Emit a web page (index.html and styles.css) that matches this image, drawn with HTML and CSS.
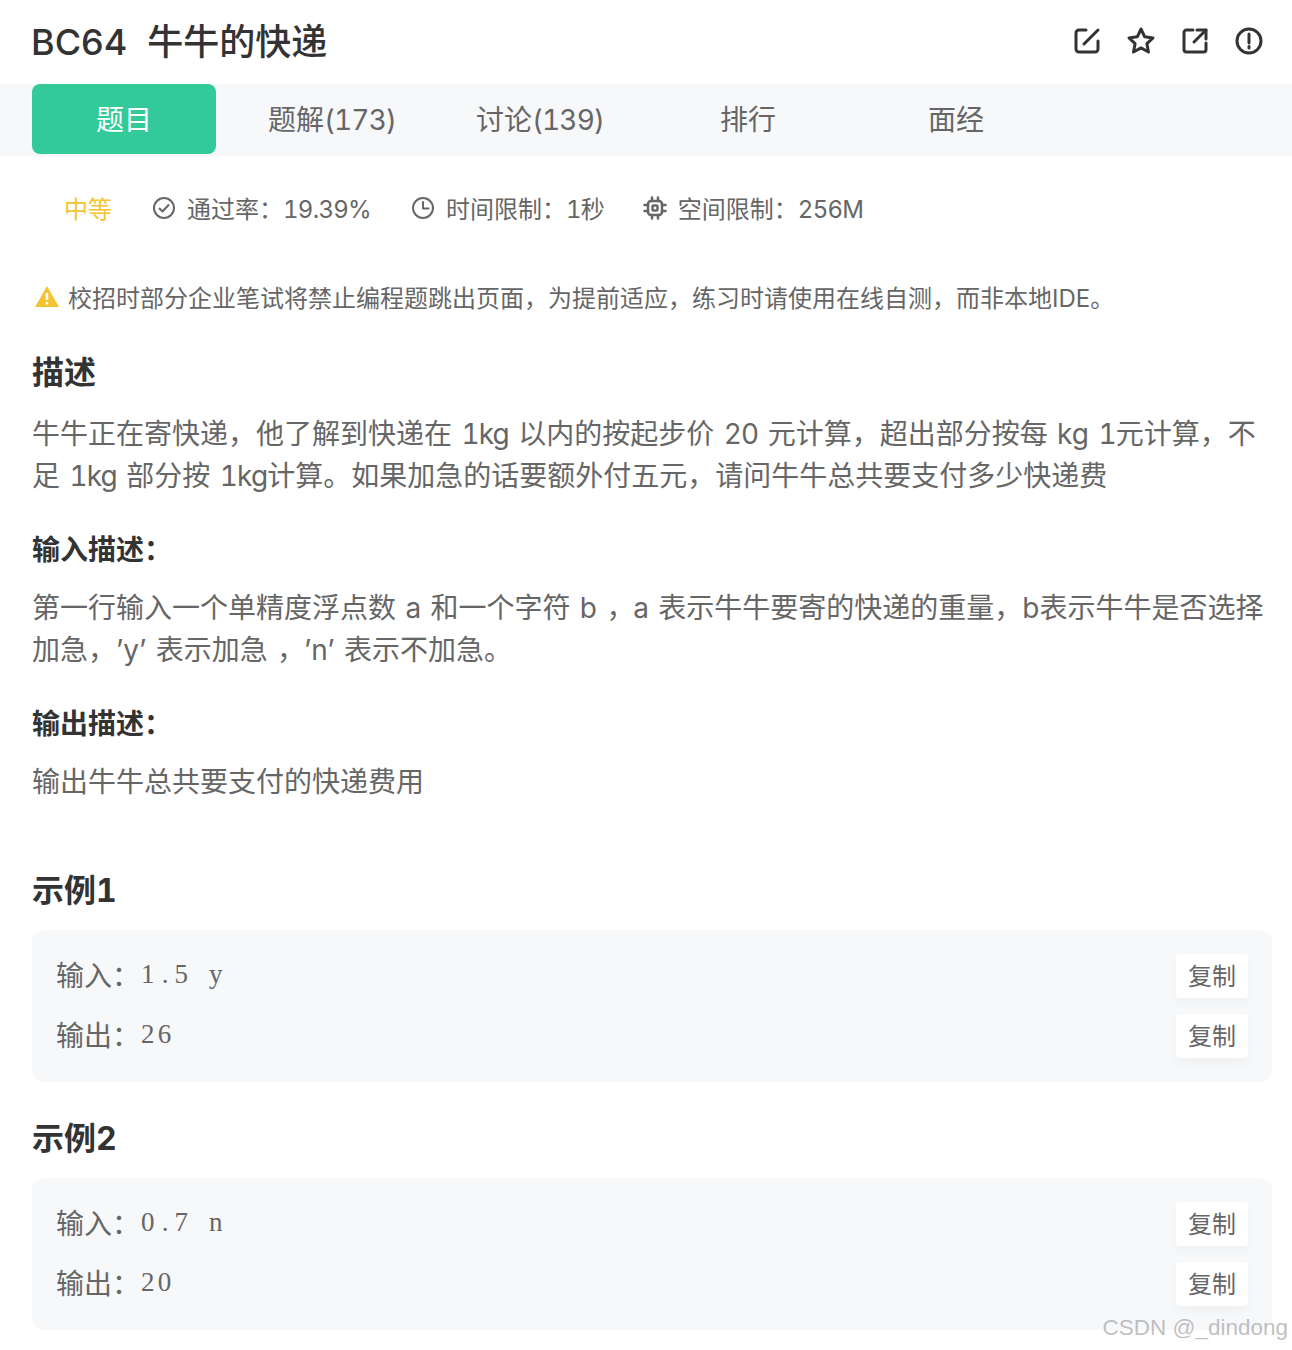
FILE: index.html
```html
<!DOCTYPE html>
<html lang="zh-CN">
<head>
<meta charset="utf-8">
<title>BC64 牛牛的快递</title>
<link rel="stylesheet" href="styles.css">
</head>
<body>
<header class="top">
  <h1 class="title"><span>BC64</span><span>牛牛的快递</span></h1>
  <div class="actions">
    <svg class="act" viewBox="0 0 32 32"><path d="M15 5H8a3 3 0 0 0-3 3v16a3 3 0 0 0 3 3h16a3 3 0 0 0 3-3v-8"/><path d="M13 19 27 5"/></svg>
    <svg class="act" viewBox="0 0 32 32"><path d="M16 4l3.700 7.800 8.300 1.100-6.100 5.800 1.600 8.300-7.500-4.100-7.500 4.100 1.600-8.300-6.100-5.800 8.300-1.100z"/></svg>
    <svg class="act" viewBox="0 0 32 32"><path d="M14 5H7.500A2.500 2.500 0 0 0 5 7.500v17A2.500 2.500 0 0 0 7.500 27h17a2.500 2.500 0 0 0 2.500-2.500V18"/><path d="M15 17 27 5"/><path d="M18 5h9v9"/></svg>
    <svg class="act" viewBox="0 0 32 32"><circle cx="16" cy="16" r="12"/><path d="M16 9v9"/><path d="M16 21.500v1.500"/></svg>
  </div>
</header>
<nav class="tabs">
  <a class="tab active">题目</a>
  <a class="tab">题解<span class="n">(173)</span></a>
  <a class="tab">讨论<span class="n">(139)</span></a>
  <a class="tab">排行</a>
  <a class="tab">面经</a>
</nav>
<main class="content">
  <div class="meta">
    <span class="level">中等</span>
    <span class="stat"><svg class="mi" viewBox="0 0 24 24"><circle cx="12" cy="12" r="10"/><path d="M7.500 12.500l3 3 6-6.500"/></svg><span>通过率：<span class="n">19.39%</span></span></span>
    <span class="stat"><svg class="mi" viewBox="0 0 24 24"><circle cx="12" cy="12" r="10"/><path d="M12 6v6.500h5.500"/></svg><span>时间限制：<span class="n">1</span>秒</span></span>
    <span class="stat"><svg class="mi chip" viewBox="0 0 24 24"><rect x="5" y="5" width="14" height="14" rx="3"/><rect x="9.500" y="9.500" width="5" height="5" rx="1"/><path d="M9 1.500V5M15 1.500V5M9 19v3.500M15 19v3.500M1.500 9H5M1.500 15H5M19 9h3.500M19 15h3.500"/></svg><span>空间限制：<span class="n">256M</span></span></span>
  </div>
  <p class="warn"><svg class="wi" viewBox="0 0 24 24"><path class="wtri" d="M12 2 24 23H0z"/><path class="wmark" d="M12 9v7M12 18v2.500"/></svg>校招时部分企业笔试将禁止编程题跳出页面，为提前适应，练习时请使用在线自测，而非本地IDE。</p>
  <h2 class="h-main">描述</h2>
  <p class="body">牛牛正在寄快递，他了解到快递在 <span class="n">1kg</span> 以内的按起步价 <span class="n">20</span> 元计算，超出部分按每 kg <span class="n">1</span>元计算，不足 <span class="n">1kg</span> 部分按 <span class="n">1kg</span>计算。如果加急的话要额外付五元，请问牛牛总共要支付多少快递费</p>
  <h3 class="h-sub">输入描述：</h3>
  <p class="body">第一行输入一个单精度浮点数 a 和一个字符 b <span class="cm">， </span>a 表示牛牛要寄的快递的重量，b表示牛牛是否选择加急，’y’ 表示加急 <span class="cm">， </span>’n’ 表示不加急。</p>
  <h3 class="h-sub">输出描述：</h3>
  <p class="body">输出牛牛总共要支付的快递费用</p>
  <h2 class="h-ex first">示例<span class="n">1</span></h2>
  <section class="sample">
    <div class="row"><div class="io">输入：<code>1<span class="dot">.</span>5 y</code></div><button class="copy">复制</button></div>
    <div class="row"><div class="io">输出：<code>26</code></div><button class="copy">复制</button></div>
  </section>
  <h2 class="h-ex">示例<span class="n">2</span></h2>
  <section class="sample">
    <div class="row"><div class="io">输入：<code>0<span class="dot">.</span>7 n</code></div><button class="copy">复制</button></div>
    <div class="row"><div class="io">输出：<code>20</code></div><button class="copy">复制</button></div>
  </section>
</main>
<div class="watermark">CSDN @_dindong</div>
</body>
</html>
```
FILE: styles.css
```css
* { box-sizing: border-box; }
html, body { margin: 0; padding: 0; }
body {
  position: relative;
  height: 1350px;
  overflow: hidden;
  background: #fff;
  color: #666;
  font-family: Inter, "Noto Sans CJK SC", sans-serif;
  text-spacing-trim: space-all;
}
.n {
  font-variant-numeric: tabular-nums;
  letter-spacing: -0.03em;
}
.top {
  height: 84px;
  padding: 0 27px 0 31px;
  display: flex;
  align-items: center;
  justify-content: space-between;
}
.title {
  margin: 0;
  display: flex;
  gap: 20px;
  font-size: 36px;
  font-weight: 500;
  line-height: 84px;
  color: #333;
}
.actions { display: flex; gap: 22px; }
.act {
  width: 32px;
  height: 32px;
  margin-top: -2px;
  fill: none;
  stroke: #333;
  stroke-width: 3;
  stroke-linecap: round;
  stroke-linejoin: round;
}
.tabs {
  height: 72px;
  padding: 0 32px 2px;
  display: flex;
  gap: 24px;
  background: #f7f8fa;
}
.tab {
  width: 184px;
  height: 70px;
  line-height: 72px;
  text-align: center;
  font-size: 28px;
  color: #666;
  border-radius: 8px;
}
.tab.active { background: #32ca99; color: #fff; }
.content { padding: 0 20px 0 32px; }
.meta {
  height: 102px;
  padding-left: 32px;
  display: flex;
  align-items: center;
  gap: 40px;
  font-size: 24px;
}
.level { color: #f4c430; }
.stat { display: flex; align-items: center; gap: 11px; }
.stat:last-child { margin-left: -2px; }
.mi {
  width: 24px;
  height: 24px;
  fill: none;
  stroke: #666;
  stroke-width: 2;
  stroke-linecap: round;
  stroke-linejoin: round;
  margin-top: 2px;
}
.chip { stroke-width: 2.500; }
.warn {
  margin: 19px 0 0;
  height: 44px;
  line-height: 44px;
  font-size: 24px;
  display: flex;
  align-items: center;
  gap: 8px;
}
.wi { width: 26px; height: 24px; flex: none; margin: 0 0 6px 2px; }
.wtri { fill: #f4c430; }
.wmark { fill: none; stroke: #fff; stroke-width: 2.500; }
.h-main {
  margin: 30px 0 0;
  font-size: 32px;
  line-height: 44px;
  font-weight: 700;
  color: #333;
}
.body {
  margin: 18px 0 0;
  font-size: 28px;
  line-height: 42px;
  word-spacing: 1.500px;
  color: #666;
}
.cm { word-spacing: -9px; }
.h-sub {
  margin: 32px 0 0;
  font-size: 28px;
  line-height: 42px;
  font-weight: 700;
  color: #333;
}
.h-sub + .body { margin-top: 16px; }
.h-ex {
  margin: 35px 0 0;
  font-size: 32px;
  line-height: 44px;
  font-weight: 700;
  color: #333;
}
.h-ex.first { margin-top: 66px; }
.sample {
  margin-top: 17px;
  height: 152px;
  padding: 24px;
  background: #f7f8fa;
  border-radius: 12px;
  display: flex;
  flex-direction: column;
  gap: 16px;
}
.row {
  height: 44px;
  display: flex;
  justify-content: space-between;
  align-items: center;
}
.io { font-size: 28px; color: #666; margin-bottom: 4px; }
.io code {
  margin-left: 1px;
  font-family: "Liberation Serif", serif;
  font-size: 27px;
  letter-spacing: 3.300px;
  word-spacing: 7.500px;
  vertical-align: 3px;
}
.dot { letter-spacing: 6px; margin-left: 4px; }
.copy {
  width: 72px;
  height: 44px;
  padding: 0 0 3px;
  border: 0;
  border-radius: 4px;
  background: #fff;
  color: #666;
  font: inherit;
  font-size: 24px;
  box-shadow: 0 4px 12px rgba(0, 0, 0, 0.04);
}
.watermark {
  position: absolute;
  right: 4px;
  top: 1312px;
  font-size: 22.500px;
  line-height: 32px;
  font-family: "Liberation Sans", sans-serif;
  color: rgba(130, 130, 130, 0.5);
}
```
